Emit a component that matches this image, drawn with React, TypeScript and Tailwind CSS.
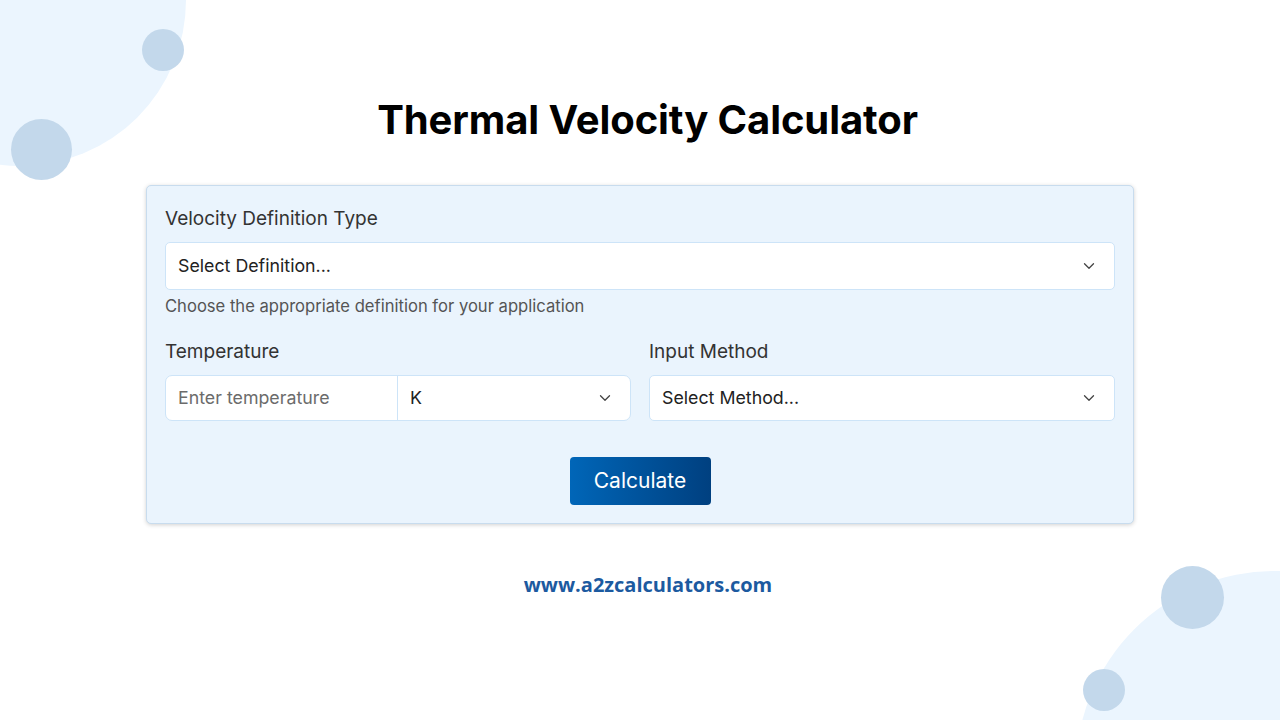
import { ChevronDown } from "lucide-react";

function Chevron() {
  return <ChevronDown className="h-[18px] w-[18px] text-[#444]" strokeWidth={1.75} />;
}

export default function App() {
  return (
    <div className="relative h-[720px] w-[1280px] overflow-hidden bg-white font-['Inter',sans-serif]">
      {/* background decoration */}
      <div className="absolute left-[-146px] top-[-166px] h-[332px] w-[332px] rounded-full bg-[#ebf5fe]" />
      <div className="absolute left-[142px] top-[29px] h-[42px] w-[42px] rounded-full bg-[#c3d8eb]" />
      <div className="absolute left-[11px] top-[119px] h-[61px] w-[61px] rounded-full bg-[#c3d8eb]" />
      <div className="absolute left-[1076px] top-[571px] h-[398px] w-[398px] rounded-full bg-[#ebf5fe]" />
      <div className="absolute left-[1161px] top-[566px] h-[63px] w-[63px] rounded-full bg-[#c3d8eb]" />
      <div className="absolute left-[1083px] top-[669px] h-[42px] w-[42px] rounded-full bg-[#c3d8eb]" />

      <div className="relative flex flex-col items-center pt-[93px]">
        <h1 className="pl-[15px] text-[40px] font-bold leading-[54px] tracking-[-0.1px] text-black">
          Thermal Velocity Calculator
        </h1>

        <div className="mt-[38px] w-[988px] rounded-[5px] border border-[#c8dcee] bg-[#eaf4fd] px-[18px] pb-[18px] pt-[20px] shadow-[0_1px_4px_rgba(0,0,0,0.18)]">
          <label className="block text-[19px] leading-[26px] text-[#333]">Velocity Definition Type</label>
          <div className="mt-[10px] flex h-[48px] items-center justify-between rounded-[5px] border border-[#cde4f8] bg-white pl-[12px] pr-[16px] text-[17.8px] leading-[24px] text-[#222]">
            <span>Select Definition...</span>
            <Chevron />
          </div>
          <p className="mt-[5px] text-[16.6px] leading-[22px] text-[#555]">
            Choose the appropriate definition for your application
          </p>

          <div className="mt-[22px] grid grid-cols-2 gap-[18px]">
            <div>
              <label className="block text-[19px] leading-[26px] text-[#333]">Temperature</label>
              <div className="mt-[10px] flex h-[46px] rounded-[7px] border border-[#cde4f8] bg-white">
                <div className="flex w-[232px] items-center border-r border-[#cde4f8] pl-[12px] text-[17.8px] leading-[24px] text-[#6b6b6b]">
                  Enter temperature
                </div>
                <div className="flex flex-1 items-center justify-between pl-[12px] pr-[16px] text-[17.8px] leading-[24px] text-[#222]">
                  <span>K</span>
                  <Chevron />
                </div>
              </div>
            </div>
            <div>
              <label className="block text-[19px] leading-[26px] text-[#333]">Input Method</label>
              <div className="mt-[10px] flex h-[46px] items-center justify-between rounded-[5px] border border-[#cde4f8] bg-white pl-[12px] pr-[16px] text-[17.8px] leading-[24px] text-[#222]">
                <span>Select Method...</span>
                <Chevron />
              </div>
            </div>
          </div>

          <div className="mt-[36px] flex justify-center">
            <button className="h-[48px] w-[141px] rounded-[4px] bg-gradient-to-r from-[#0066b8] to-[#004080] text-[21px] text-white">
              Calculate
            </button>
          </div>
        </div>

        <p className="mt-[46px] pl-[16px] font-['Open_Sans',sans-serif] text-[20px] font-bold text-[#1c5aa0]">
          www.a2zcalculators.com
        </p>
      </div>
    </div>
  );
}
